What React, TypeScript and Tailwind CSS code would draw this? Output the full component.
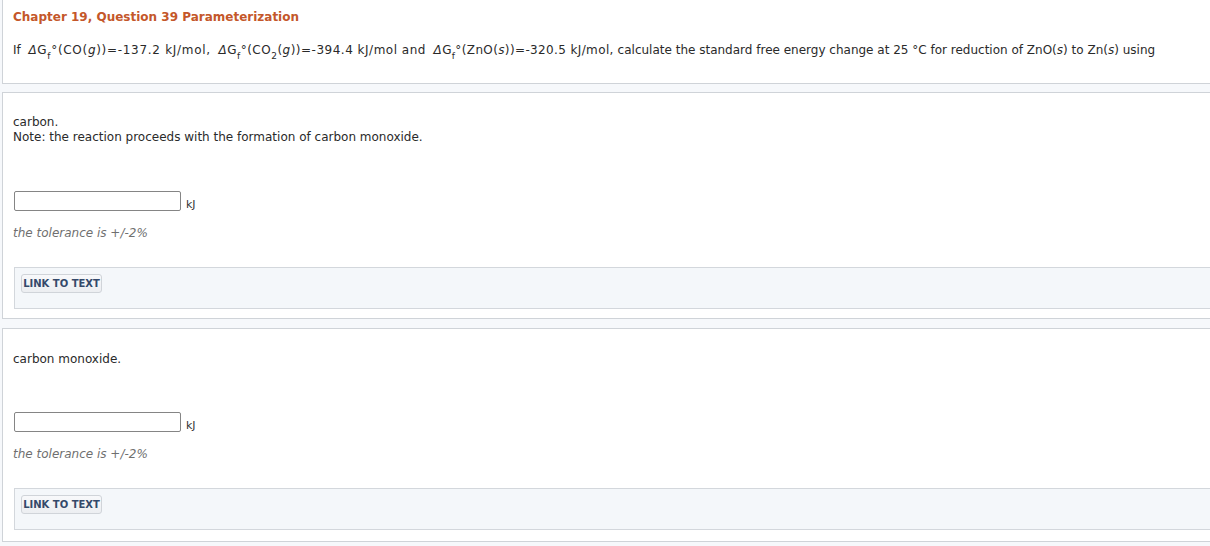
import React from "react";

function Delta() {
  return (
    <span>
      <i>Δ</i>G<sub className="text-[9px] align-[-3px]">f</sub>°
    </span>
  );
}

function LinkBox() {
  return (
    <div className="ml-[1px] w-[1300px] border border-[#d3d7dc] bg-[#f4f7fa] px-[6px] pt-[6px] pb-[15px]">
      <button className="block h-[19px] w-[81px] rounded-[3px] border border-[#d0d4d9] bg-gradient-to-b from-[#f8f9fb] to-[#eceef1] text-[10px] font-bold text-[#34496a] leading-[17px]">
        LINK TO TEXT
      </button>
    </div>
  );
}

function Answer() {
  return (
    <div>
      <div className="flex items-end pl-[1px]">
        <div className="h-[20px] w-[167px] rounded-[2px] border border-[#858585] bg-white" />
        <span className="ml-[5px] text-[11px] leading-[13px] text-[#333]">kJ</span>
      </div>
      <div className="mt-[15px] text-[12px] italic leading-[15px] text-[#6f6f6f]">
        the tolerance is +/-2%
      </div>
    </div>
  );
}

export default function App() {
  return (
    <div
      className="h-[546px] w-[1210px] overflow-hidden bg-[#f6f8fb] text-[#2a2a2a]"
      style={{ fontFamily: '"DejaVu Sans", Verdana, sans-serif' }}
    >
      <div className="ml-[2px] w-[1300px] border-b border-l border-[#cfd3d8] bg-white pl-[10px] pt-[10px] pb-[25px]">
        <div className="text-[12px] font-bold leading-[15px] text-[#c4572a]">
          Chapter 19, Question 39 Parameterization
        </div>
        <div className="mt-[18px] text-[12px] leading-[15px] whitespace-nowrap">
          If&nbsp;{" "}
          <span className="tracking-[0.7px]">
            <Delta />(CO(<i>g</i>))=-137.2 kJ/mol,
          </span>
          &nbsp;{" "}
          <span className="tracking-[0.5px]">
            <Delta />(CO<sub className="text-[9px] align-[-3px]">2</sub>(<i>g</i>))=-394.4 kJ/mol and
          </span>
          &nbsp;{" "}
          <span className="tracking-[0.37px]">
            <Delta />(ZnO(<i>s</i>))=-320.5 kJ/mol,
          </span>{" "}
          calculate the standard free energy change at 25 °C for reduction of ZnO(<i>s</i>) to Zn(<i>s</i>) using
        </div>
      </div>

      <div className="mt-[8px] ml-[2px] w-[1300px] border-t border-b border-l border-[#cfd3d8] bg-white pl-[10px] pt-[22px] pb-[9px]">
        <div className="text-[12px] leading-[15px]">
          carbon.
          <br />
          Note: the reaction proceeds with the formation of carbon monoxide.
        </div>
        <div className="mt-[46px]">
          <Answer />
        </div>
        <div className="mt-[26px]">
          <LinkBox />
        </div>
      </div>

      <div className="mt-[9px] ml-[2px] w-[1300px] border-t border-b border-l border-[#cfd3d8] bg-white pl-[10px] pt-[23px] pb-[11px]">
        <div className="text-[12px] leading-[15px]">carbon monoxide.</div>
        <div className="mt-[45px]">
          <Answer />
        </div>
        <div className="mt-[26px]">
          <LinkBox />
        </div>
      </div>
    </div>
  );
}
